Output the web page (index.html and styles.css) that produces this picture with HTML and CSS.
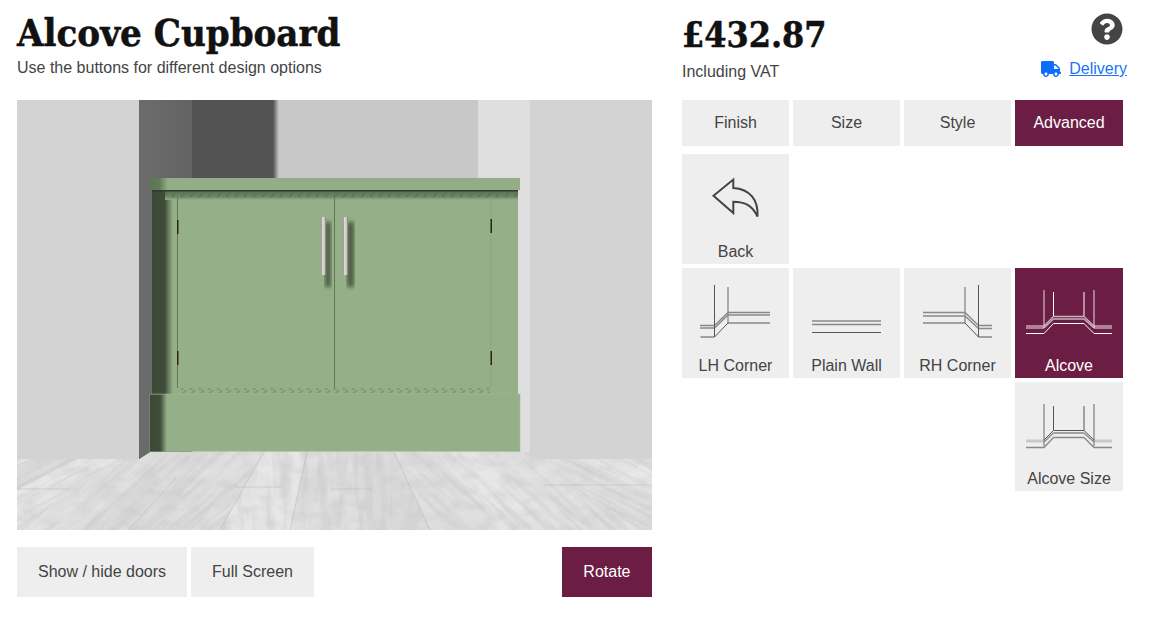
FILE: index.html
```html
<!DOCTYPE html>
<html>
<head>
    <title>Alcove Cupboard</title>
    <link rel="stylesheet" href="styles.css">
</head>
<body>
<div class="page">
    <div class="left_col">
        <div class="head_left">
            <h1>Alcove Cupboard</h1>
            <p>Use the buttons for different design options</p>
        </div>

        <!-- 3d preview -->
        <svg class="scene" viewBox="17 100 635 430">
            <defs>
                <linearGradient id="chimney" x1="0" x2="1" y1="0" y2="0">
                    <stop offset="0" stop-color="#6c6c6c"/>
                    <stop offset="1" stop-color="#626262"/>
                </linearGradient>
                <linearGradient id="edge" x1="0" x2="1" y1="0" y2="0">
                    <stop offset="0" stop-color="#535353"/>
                    <stop offset="1" stop-color="#c8c8c8"/>
                </linearGradient>
                <linearGradient id="side_shadow" x1="0" x2="1" y1="0" y2="0">
                    <stop offset="0" stop-color="#3d4937"/>
                    <stop offset="0.6" stop-color="#3f4c39"/>
                    <stop offset="1" stop-color="#95b089"/>
                </linearGradient>
                <linearGradient id="counter_end" x1="0" x2="1" y1="0" y2="0">
                    <stop offset="0" stop-color="#5d7455"/>
                    <stop offset="0.5" stop-color="#63795a"/>
                    <stop offset="1" stop-color="#93ae87"/>
                </linearGradient>
                <linearGradient id="top_shadow" x1="0" x2="0" y1="0" y2="1">
                    <stop offset="0" stop-color="#5b6e54"/>
                    <stop offset="0.65" stop-color="#708867"/>
                    <stop offset="1" stop-color="#95b089"/>
                </linearGradient>
                <linearGradient id="steel" x1="0" x2="1" y1="0" y2="0">
                    <stop offset="0" stop-color="#85837b"/>
                    <stop offset="0.3" stop-color="#dcdad3"/>
                    <stop offset="0.7" stop-color="#c9c7bf"/>
                    <stop offset="1" stop-color="#6f6e67"/>
                </linearGradient>
                <pattern id="dentil" width="9" height="6" patternUnits="userSpaceOnUse">
                    <path class="dentil_mark" d="M1 5L5 1"/>
                </pattern>
                <pattern id="dentil_low" width="9" height="5" patternUnits="userSpaceOnUse">
                    <path class="dentil_low_mark" d="M1 5L6 0"/>
                </pattern>
                <filter id="grain">
                    <feTurbulence type="fractalNoise" baseFrequency="0.11 0.022" numOctaves="4" seed="4"/>
                    <feColorMatrix type="matrix" values="0 0 0 0 0.5  0 0 0 0 0.5  0 0 0 0 0.5  1.8 0 0 0 -0.72"/>
                </filter>
                <filter id="blotch">
                    <feTurbulence type="fractalNoise" baseFrequency="0.05 0.09" numOctaves="4" seed="9"/>
                    <feColorMatrix type="matrix" values="0 0 0 0 0.55  0 0 0 0 0.55  0 0 0 0 0.55  1.6 0 0 0 -0.62"/>
                </filter>
                <filter id="soft"><feGaussianBlur stdDeviation="2"/></filter>
                <clipPath id="f1"><polygon points="3,452 134,452 10,530 -200,530"/></clipPath>
                <clipPath id="f2"><polygon points="134,452 264,452 220,530 10,530"/></clipPath>
                <clipPath id="f3"><polygon points="264,452 394,452 430,530 220,530"/></clipPath>
                <clipPath id="f4"><polygon points="394,452 524,452 640,530 430,530"/></clipPath>
                <clipPath id="f5"><polygon points="524,452 654,452 850,530 640,530"/></clipPath>
            </defs>

            <!-- floor planks -->
            <rect class="plank_a" x="17" y="452" width="635" height="78"/>
            <polygon class="plank_b" points="3,452 47,452 -130,530 -200,530"/>
            <polygon class="plank_c" points="47,452 90,452 -60,530 -130,530"/>
            <polygon class="plank_b" points="90,452 134,452 10,530 -60,530"/>
            <polygon class="plank_c" points="177,452 220,452 150,530 80,530"/>
            <polygon class="plank_d" points="220,452 264,452 220,530 150,530"/>
            <polygon class="plank_b" points="264,452 307,452 290,530 220,530"/>
            <polygon class="plank_d" points="307,452 350,452 360,530 290,530"/>
            <polygon class="plank_c" points="350,452 394,452 430,530 360,530"/>
            <polygon class="plank_d" points="394,452 437,452 500,530 430,530"/>
            <polygon class="plank_b" points="437,452 481,452 570,530 500,530"/>
            <polygon class="plank_d" points="524,452 568,452 710,530 640,530"/>
            <polygon class="plank_b" points="568,452 611,452 780,530 710,530"/>
            <g clip-path="url(#f1)"><rect class="grain" transform="translate(0 452) skewX(-62)" x="-100" y="0" width="900" height="78"/></g>
            <g clip-path="url(#f2)"><rect class="grain" transform="translate(0 452) skewX(-47)" x="-100" y="0" width="800" height="78"/></g>
            <g clip-path="url(#f3)"><rect class="grain" x="200" y="452" width="260" height="78"/></g>
            <g clip-path="url(#f4)"><rect class="grain" transform="translate(0 452) skewX(47)" x="250" y="0" width="500" height="78"/></g>
            <g clip-path="url(#f5)"><rect class="grain" transform="translate(0 452) skewX(62)" x="300" y="0" width="500" height="78"/></g>
            <rect class="blotch" x="17" y="452" width="635" height="78"/>
            <path class="joint" d="M307 452L290 530M264 452L220 530M394 452L430 530M17 489H70M235 487L281 487M330 489L372 489M544 485L652 485M176 478L128 530"/>

            <!-- walls -->
            <rect class="wall_side" x="17" y="100" width="122" height="359"/>
            <rect class="wall_side" x="530" y="100" width="122" height="359"/>
            <polygon class="wall_return" points="139,100 150,100 150,452 139,459"/>
            <rect x="139" y="100" width="53" height="352" fill="url(#chimney)"/>
            <polygon class="wall_return" points="139,440 150,440 150,452 139,459"/>
            <rect class="wall_dark" x="192" y="100" width="82" height="80"/>
            <rect x="273" y="100" width="6" height="80" fill="url(#edge)"/>
            <rect class="wall_back" x="279" y="100" width="199" height="80"/>
            <rect class="wall_pale" x="478" y="100" width="52" height="352"/>

            <!-- cupboard carcass -->
            <rect class="green" x="152" y="190" width="366" height="205"/>
            <rect x="152" y="191" width="21" height="204" fill="url(#side_shadow)"/>
            <rect x="165" y="191" width="353" height="9" fill="url(#top_shadow)"/>
            <rect x="165" y="192" width="353" height="6" fill="url(#dentil)"/>
            <rect class="counter" x="150" y="178" width="370" height="12"/>
            <rect x="150" y="178" width="18" height="12" fill="url(#counter_end)"/>
            <rect class="counter_line" x="152" y="190" width="366" height="1.5"/>

            <!-- doors -->
            <path class="door_line" d="M177.5 197V388M334.5 197V388"/>
            <path class="door_faint" d="M491 197V388"/>
            <rect x="179" y="388" width="311" height="5" fill="url(#dentil_low)"/>

            <!-- handles -->
            <rect class="handle_shadow" x="325" y="222" width="6" height="65" filter="url(#soft)"/>
            <rect class="handle_shadow" x="347" y="222" width="7" height="65" filter="url(#soft)"/>
            <rect x="321" y="217" width="5" height="58" fill="url(#steel)"/>
            <rect x="343" y="217" width="5" height="58" fill="url(#steel)"/>

            <!-- hinges -->
            <rect class="hinge" x="177" y="220" width="1.5" height="14"/>
            <rect class="hinge" x="490.5" y="219" width="1.5" height="14"/>
            <rect class="hinge" x="177" y="351" width="1.5" height="14"/>
            <rect class="hinge" x="490.5" y="351" width="1.5" height="14"/>

            <!-- plinth -->
            <rect class="plinth" x="150" y="394" width="370" height="57.5"/>
            <rect x="150" y="394.5" width="17" height="57" fill="url(#side_shadow)"/>
        </svg>

        <div class="view_btns">
            <button class="btn">Show / hide doors</button>
            <button class="btn">Full Screen</button>
            <button class="btn active rotate">Rotate</button>
        </div>
    </div>

    <div class="right_col">
        <div class="head_right">
            <div>
                <div class="price">£432.87</div>
                <div class="vat">Including VAT</div>
            </div>
            <div class="help">
                <svg class="help_icon" viewBox="0 0 512 512"><path d="M504 256c0 136.997-111.043 248-248 248S8 392.997 8 256C8 119.083 119.043 8 256 8s248 111.083 248 248zM262.655 90c-54.497 0-89.255 22.957-116.549 63.758-3.536 5.286-2.353 12.415 2.715 16.258l34.699 26.31c5.205 3.947 12.621 3.008 16.665-2.122 17.864-22.658 30.113-35.797 57.303-35.797 20.429 0 45.698 13.148 45.698 32.958 0 14.976-12.363 22.667-32.534 33.976C247.128 238.528 216 254.941 216 296v4c0 6.627 5.373 12 12 12h56c6.627 0 12-5.373 12-12v-1.333c0-28.462 83.186-29.647 83.186-106.667 0-58.002-60.165-102-116.531-102zM256 338c-25.365 0-46 20.635-46 46 0 25.364 20.635 46 46 46s46-20.636 46-46c0-25.365-20.635-46-46-46z"/></svg>
                <div class="delivery">
                    <svg class="truck_icon" viewBox="0 0 640 512"><path d="M624 352h-16V243.9c0-12.7-5.1-24.9-14.1-33.9L494 110.1c-9-9-21.2-14.1-33.9-14.1H416V48c0-26.5-21.5-48-48-48H48C21.5 0 0 21.5 0 48v320c0 26.5 21.5 48 48 48h16c0 53 43 96 96 96s96-43 96-96h128c0 53 43 96 96 96s96-43 96-96h48c8.8 0 16-7.2 16-16v-32c0-8.8-7.2-16-16-16zM160 464c-26.5 0-48-21.5-48-48s21.5-48 48-48 48 21.5 48 48-21.5 48-48 48zm320 0c-26.5 0-48-21.5-48-48s21.5-48 48-48 48 21.5 48 48-21.5 48-48 48zm80-208H416V144h44.1l99.9 99.9V256z"/></svg>
                    <a href="#">Delivery</a>
                </div>
            </div>
        </div>

        <div class="tabs">
            <button class="btn tab">Finish</button>
            <button class="btn tab">Size</button>
            <button class="btn tab">Style</button>
            <button class="btn tab active">Advanced</button>
        </div>

        <div class="options">
            <div class="tile">
                <svg class="tile_icon" viewBox="0 0 107 90"><path class="back_arrow" d="M31.5 41.7L51.3 25.5V34C68 35 76.5 46 75.5 62.5C70.5 52 63.5 47.8 51.3 47.8V59Z"/></svg>
                <span>Back</span>
            </div>
            <div class="tile empty"></div>
            <div class="tile empty"></div>
            <div class="tile empty"></div>

            <div class="tile">
                <svg class="tile_icon" viewBox="0 0 107 90">
                    <path class="ln" d="M32.5 17V69M18.5 69H32.5L46 55M46 55H88"/>
                    <path class="ln_soft" d="M46 19V55M18 57.5H32.5L46 44.5H88M18 60H32.5L46 47H88"/>
                </svg>
                <span>LH Corner</span>
            </div>
            <div class="tile">
                <svg class="tile_icon" viewBox="0 0 107 90">
                    <path class="ln" d="M19 64.5H88"/>
                    <path class="ln_soft" d="M19 53H88M19 56.5H88"/>
                </svg>
                <span>Plain Wall</span>
            </div>
            <div class="tile">
                <svg class="tile_icon" viewBox="0 0 107 90">
                    <path class="ln" d="M74.5 17V69M88 69H74.5L61 55M61 55H19"/>
                    <path class="ln_soft" d="M61 19V55M19 44.5H61L74.5 57.5H88M19 48H61L74.5 60.5H88"/>
                </svg>
                <span>RH Corner</span>
            </div>
            <div class="tile active">
                <svg class="tile_icon" viewBox="0 0 108 90">
                    <path class="ln" d="M38.5 24V48M69 24V48M38.5 55.5H69M11 65.5H29L38.5 55.5M97 65.5H79L69 55.5"/>
                    <path class="ln_soft" d="M29 22V60M79 22V60M38.5 48.5H69M38.5 51H69M29 58L38.5 48.5M29 60L38.5 51M79 58L69 48.5M79 60L69 51"/>
                    <path class="ln_band" d="M11 59H29M79 59H97"/>
                </svg>
                <span>Alcove</span>
            </div>

            <div class="tile empty"></div>
            <div class="tile empty"></div>
            <div class="tile empty"></div>
            <div class="tile low">
                <svg class="tile_icon" viewBox="0 0 108 90">
                    <path class="ln" d="M38.5 24V48M69 24V48M38.5 48.5H69M29 58L38.5 48.5M79 58L69 48.5"/>
                    <path class="ln_soft" d="M29 22V64M79 22V64M38.5 51H69M38.5 55.5H69M11 65.5H29L38.5 55.5M97 65.5H79L69 55.5M29 60L38.5 51M79 60L69 51"/>
                    <path class="ln_band" d="M11 59H29M79 59H97"/>
                </svg>
                <span>Alcove Size</span>
            </div>
        </div>
    </div>
</div>
</body>
</html>
```

FILE: styles.css
```css
body{
    margin: 0;
    background: #fff;
    color: #444;
    font-family: "Liberation Sans", Arial, sans-serif;
    font-size: 16px;
}
.page{
    display: flex;
    gap: 30px;
    padding-left: 17px;
}
.left_col{
    width: 635px;
}
.right_col{
    width: 445px;
}

/* headings */
.head_left{
    height: 100px;
}
h1{
    margin: 0;
    padding-top: 10px;
    font-family: "DejaVu Serif Condensed", "DejaVu Serif", serif;
    font-size: 38px;
    line-height: 46px;
    font-weight: bold;
    color: #111;
    -webkit-text-stroke: 0.5px #111;
}
.head_left p{
    margin: 2px 0 0;
    line-height: 20px;
}
.head_right{
    height: 100px;
    display: flex;
    justify-content: space-between;
}
.price{
    padding-top: 12px;
    font-family: "DejaVu Serif Condensed", "DejaVu Serif", serif;
    font-size: 35.5px;
    line-height: 46px;
    font-weight: bold;
    color: #111;
    -webkit-text-stroke: 0.5px #111;
}
.vat{
    padding-top: 4px;
    line-height: 20px;
}
.help{
    display: flex;
    flex-direction: column;
    align-items: flex-end;
}
.help_icon{
    width: 32px;
    height: 32px;
    margin-top: 13px;
    margin-right: 4px;
    fill: #444;
}
.delivery{
    display: flex;
    align-items: center;
    gap: 8px;
    margin-top: 14px;
    line-height: 20px;
}
.delivery a{
    color: #1a73f8;
}
.truck_icon{
    width: 20px;
    height: 16px;
    fill: #0d6efd;
}

/* preview */
.scene{
    display: block;
    width: 635px;
    height: 430px;
}
.plank_a{ fill: #e2e2e2; }
.plank_b{ fill: #e7e7e7; }
.plank_c{ fill: #dcdcdc; }
.plank_d{ fill: #e0e0e0; }
.grain{ filter: url(#grain); opacity: 0.5; }
.blotch{ filter: url(#blotch); opacity: 0.5; }
.joint{ stroke: #b8b8b8; stroke-width: 1; fill: none; opacity: 0.5; }
.wall_side{ fill: #d3d3d3; }
.wall_return{ fill: #6a6a6a; }
.wall_dark{ fill: #535353; }
.wall_back{ fill: #c8c8c8; }
.wall_pale{ fill: #dedede; }
.green{ fill: #95b089; }
.counter{ fill: #93ae87; }
.counter_line{ fill: #2f3b2c; }
.plinth{ fill: #95b089; stroke: #a3bb98; stroke-width: 0.5; }
.door_line{ stroke: #64795c; stroke-width: 1; fill: none; }
.door_faint{ stroke: #8aa47f; stroke-width: 1; fill: none; }
.dentil_mark{ stroke: #5d7055; stroke-width: 1.5; fill: none; }
.dentil_low_mark{ stroke: #7f9875; stroke-width: 2; fill: none; }
.handle_shadow{ fill: #3f4c39; opacity: 0.85; }
.hinge{ fill: #2d2418; }

/* buttons */
.btn{
    border: none;
    background: #eee;
    color: #444;
    font-family: inherit;
    font-size: 16px;
    cursor: pointer;
}
.btn.active, .tile.active{
    background: #6b1d44;
    color: #fff;
}
.view_btns{
    display: flex;
    gap: 4px;
    margin-top: 17px;
}
.view_btns .btn{
    height: 50px;
    padding: 0 21px;
}
.view_btns .rotate{
    margin-left: auto;
    padding: 0 21.5px;
}

/* option tiles */
.tabs, .options{
    display: grid;
    grid-template-columns: 107px 107px 107px 108px;
    gap: 4px;
}
.tab{
    height: 46px;
    padding: 0;
}
.options{
    margin-top: 8px;
}
.tile{
    height: 110px;
    background: #eee;
    display: flex;
    flex-direction: column;
    align-items: center;
}
.tile.low{
    height: 109px;
}
.tile.empty{
    background: none;
}
.tile span{
    line-height: 18px;
    margin-top: -1px;
}
.tile.low span{
    margin-top: -2px;
}
.tile_icon{
    display: block;
    width: 100%;
    height: 90px;
}
.back_arrow{
    fill: none;
    stroke: #444;
    stroke-width: 2;
}
.ln{ fill: none; stroke: #555; stroke-width: 1; }
.ln_soft{ fill: none; stroke: #666; stroke-width: 1.3; opacity: 0.75; }
.ln_band{ fill: none; stroke: #888; stroke-width: 3; opacity: 0.35; }
.active .ln{ stroke: #fff; }
.active .ln_soft{ stroke: #fff; opacity: 0.65; }
.active .ln_band{ stroke: #fff; stroke-width: 4; opacity: 0.45; }
```
